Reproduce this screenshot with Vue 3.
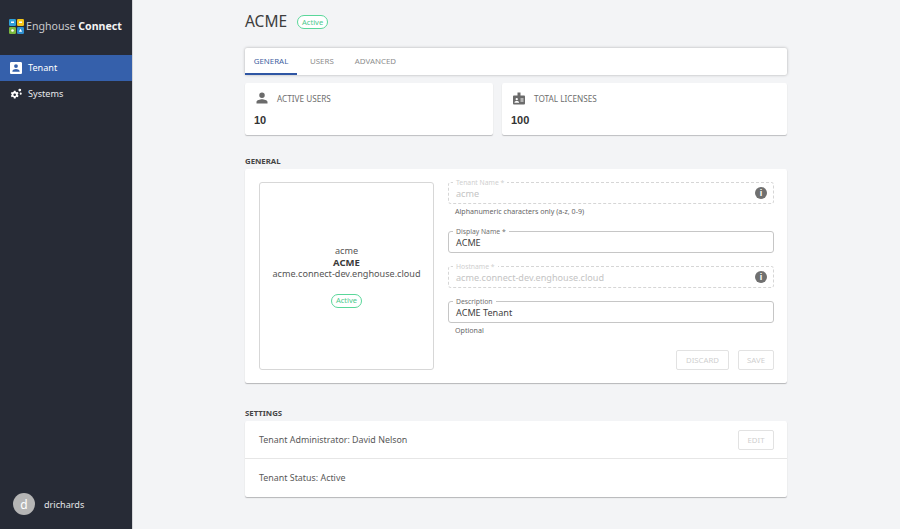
<script setup>
const fields = [
  { label: 'Tenant Name *', value: 'acme', disabled: true, hint: 'Alphanumeric characters only (a-z, 0-9)' },
  { label: 'Display Name *', value: 'ACME' },
  { label: 'Hostname *', value: 'acme.connect-dev.enghouse.cloud', disabled: true },
  { label: 'Description', value: 'ACME Tenant', hint: 'Optional' },
]
</script>

<template>
  <div class="app">
    <aside class="sidebar">
      <div class="logo">
        <svg class="logo-mark" width="15" height="15" viewBox="0 0 15 15">
          <rect x="0" y="0" width="7" height="7" rx="1.2" fill="#2f9fd8" />
          <rect x="8" y="0" width="7" height="7" rx="1.2" fill="#f5c518" />
          <rect x="0" y="8" width="7" height="7" rx="1.2" fill="#7cb83e" />
          <rect x="8" y="8" width="7" height="7" rx="1.2" fill="#2f8fd0" />
          <rect x="2" y="2.5" width="3" height="1.5" fill="#fff" />
          <rect x="10" y="2.5" width="3" height="1.5" fill="#fff" />
          <circle cx="3.5" cy="11.5" r="1.3" fill="#fff" />
          <path d="M11.5 9.8l1.6 3h-3.2z" fill="#fff" />
        </svg>
        <span class="logo-text">Enghouse <b>Connect</b></span>
      </div>
      <nav class="nav">
        <div class="nav-item active">
          <svg width="12" height="12" viewBox="0 0 12 12">
            <path fill-rule="evenodd" fill="#fff" d="M1.3 0h9.4C11.4 0 12 .6 12 1.3v9.4c0 .7-.6 1.3-1.3 1.3H1.3C.6 12 0 11.4 0 10.7V1.3C0 .6.6 0 1.3 0zM6 2.2a1.9 1.9 0 1 0 0 3.8 1.9 1.9 0 0 0 0-3.8zM2.4 9.8h7.2V9c0-1.3-2.4-2-3.6-2s-3.6.7-3.6 2z" />
          </svg>
          <span>Tenant</span>
        </div>
        <div class="nav-item">
          <svg width="12" height="12" viewBox="0 0 13 12">
            <path fill="#fff" fill-rule="evenodd" d="M4.2 2.4h1.8l.3 1.2.9.5 1.2-.4.9 1.6-.9.8v1l.9.8-.9 1.6-1.2-.4-.9.5-.3 1.2H4.2l-.3-1.2-.9-.5-1.2.4-.9-1.6.9-.8v-1l-.9-.8.9-1.6 1.2.4.9-.5zM5.1 5.4a1.4 1.4 0 1 0 0 2.8 1.4 1.4 0 0 0 0-2.8z" />
            <circle cx="10.6" cy="1.8" r="1.5" fill="#fff" />
            <circle cx="11.6" cy="5.6" r="1.1" fill="#fff" />
          </svg>
          <span>Systems</span>
        </div>
      </nav>
      <div class="user">
        <div class="avatar">d</div>
        <span>drichards</span>
      </div>
    </aside>

    <main class="main">
      <header class="title-row">
        <h1>ACME</h1>
        <span class="badge">Active</span>
      </header>

      <div class="tabs">
        <div class="tab active">GENERAL</div>
        <div class="tab">USERS</div>
        <div class="tab">ADVANCED</div>
      </div>

      <div class="stats">
        <div class="stat card users">
          <div class="stat-head">
            <svg width="12" height="12" viewBox="0 0 24 24"><path fill="#6b6b6b" d="M12 12a5.500 5.500 0 1 0 0-11 5.500 5.500 0 0 0 0 11zm0 2.500c-3.700 0-11 1.900-11 5.500v3h22v-3c0-3.600-7.300-5.500-11-5.500z" /></svg>
            <span>ACTIVE USERS</span>
          </div>
          <div class="stat-num">10</div>
        </div>
        <div class="stat card licenses">
          <div class="stat-head">
            <svg width="12" height="13" viewBox="0 0 24 26"><path fill="#6b6b6b" fill-rule="evenodd" d="M9 1h6v6h7c1 0 2 1 2 2v14c0 1-1 2-2 2H2c-1 0-2-1-2-2V9c0-1 1-2 2-2h7zM7.500 12a2.300 2.300 0 1 0 0 4.600 2.300 2.300 0 0 0 0-4.600zM3 21.500h9v-1.300c0-1.600-3-2.400-4.500-2.400S3 18.600 3 20.200zM15 13v2h6v-2zm0 4v2h6v-2z" /></svg>
            <span>TOTAL LICENSES</span>
          </div>
          <div class="stat-num">100</div>
        </div>
      </div>

      <h2 class="section first">GENERAL</h2>
      <section class="card general">
        <div class="preview">
          <div>acme</div>
          <div class="strong">ACME</div>
          <div>acme.connect-dev.enghouse.cloud</div>
          <span class="badge small">Active</span>
        </div>
        <div class="form">
          <div v-for="f in fields" :key="f.label" class="field-wrap">
            <div class="field" :class="{ disabled: f.disabled }">
              <span class="legend">{{ f.label }}</span>
              <span class="value">{{ f.value }}</span>
              <span v-if="f.disabled" class="info">i</span>
            </div>
            <div v-if="f.hint" class="hint">{{ f.hint }}</div>
          </div>
          <div class="actions">
            <button class="btn discard">DISCARD</button>
            <button class="btn save">SAVE</button>
          </div>
        </div>
      </section>

      <h2 class="section second">SETTINGS</h2>
      <section class="card settings">
        <div class="row">
          <span>Tenant Administrator: David Nelson</span>
          <button class="btn save">EDIT</button>
        </div>
        <div class="row">
          <span>Tenant Status: Active</span>
        </div>
      </section>
    </main>
  </div>
</template>

<style>
html, body { margin: 0; padding: 0; }
</style>

<style scoped>
.app {
  display: flex;
  width: 900px;
  height: 529px;
  overflow: hidden;
  background: #f3f4f6;
  font-family: "Noto Sans", "Open Sans", sans-serif;
  color: #4a4a4a;
}
svg { flex: none; }
.sidebar {
  width: 133px;
  box-sizing: border-box;
  flex: none;
  background: #272b36;
  border-right: 1px solid #d5d6d9;
  display: flex;
  flex-direction: column;
  color: #fff;
}
.logo {
  height: 55px;
  display: flex;
  align-items: center;
  gap: 2px;
  padding-left: 9px;
  padding-bottom: 3px;
  box-sizing: border-box;
}
.logo-text { font-size: 10.600px; color: #c9cacd; white-space: nowrap; }
.logo-text b { color: #f4f4f4; font-weight: 700; }
.nav-item {
  height: 26px;
  display: flex;
  align-items: center;
  gap: 6px;
  padding-left: 10px;
  padding-bottom: 1px;
  box-sizing: border-box;
  font-size: 9.100px;
  color: #e8e9eb;
}
.nav-item.active { background: #3560ab; color: #fff; }
.user {
  margin-top: auto;
  height: 49px;
  display: flex;
  align-items: center;
  gap: 9px;
  padding-left: 13px;
  padding-bottom: 1px;
  box-sizing: border-box;
  font-size: 9.100px;
  color: #e4e5e8;
}
.avatar {
  width: 22px;
  height: 22px;
  border-radius: 50%;
  background: #b5b5b5;
  color: #fff;
  display: flex;
  align-items: center;
  justify-content: center;
  font-size: 12px;
}
.main {
  width: 542px;
  margin-left: 112px;
  flex: none;
  display: flex;
  flex-direction: column;
}
.title-row {
  height: 48px;
  display: flex;
  align-items: center;
  gap: 10px;
  padding-bottom: 4px;
  box-sizing: border-box;
}
h1 {
  margin: 0;
  font-size: 15.500px;
  font-weight: 400;
  color: #3d3d3d;
  line-height: 1;
}
.badge {
  box-sizing: border-box;
  height: 14px;
  width: 31px;
  display: inline-flex;
  align-items: center;
  justify-content: center;
  border: 1px solid #5ad79a;
  border-radius: 7px;
  font-size: 7.500px;
  color: #4cc98c;
  background: #fff;
}
.card {
  background: #fff;
  border-radius: 2px;
  box-shadow: 0 1px 1px #c4c5c8;
}
.tabs {
  height: 27px;
  background: #fff;
  border-radius: 2px;
  box-shadow: 0 0 3px rgba(0,0,0,.3);
  display: flex;
  font-size: 7.900px;
  color: #8d8d8d;
}
.tab {
  box-sizing: border-box;
  height: 27px;
  padding-bottom: 2px;
  display: flex;
  align-items: center;
}
.tab:first-child { width: 52px; justify-content: center; margin-right: 13px; }
.tab:nth-child(2) { margin-right: 21px; }
.tab.active { color: #3f5f9f; border-bottom: 2px solid #2f56a4; padding-bottom: 0; }
.stats {
  margin-top: 8px;
  display: flex;
  gap: 9px;
}
.stat {
  height: 52px;
  box-sizing: border-box;
  padding: 8px 9px 0;
  box-shadow: 0 1px 1px #bdbec1;
}
.stat.users { width: 248px; flex: none; }
.stat.licenses { flex: 1; }
.stat-head {
  display: flex;
  align-items: center;
  gap: 9px;
  font-size: 8.200px;
  color: #6e6e6e;
  height: 14px;
  padding-left: 2px;
}
.stat-num {
  margin-top: 8px;
  font-family: "Liberation Sans", sans-serif;
  font-weight: 700;
  font-size: 11px;
  line-height: 14px;
  color: #333;
}
.section {
  margin: 0;
  font-size: 7.800px;
  font-weight: 700;
  color: #454545;
  line-height: 11px;
}
.section.first { margin-top: 21px; margin-bottom: 2px; }
.section.second { margin-top: 25px; margin-bottom: 2px; }
.general {
  height: 214px;
  box-sizing: border-box;
  padding: 13px 13px 0 14px;
  display: flex;
  gap: 14px;
  box-shadow: 0 1px 1px #b5b6b9;
}
.preview {
  box-sizing: border-box;
  width: 175px;
  height: 188px;
  border: 1px solid #d7d7d7;
  border-radius: 3px;
  display: flex;
  flex-direction: column;
  align-items: center;
  padding-top: 62px;
  font-size: 9.100px;
  line-height: 11.700px;
  color: #555;
}
.strong { font-weight: 700; color: #3b3b3b; font-size: 9.500px; }
.badge.small { margin-top: 14px; }
.form { flex: 1; display: flex; flex-direction: column; }
.field-wrap { height: 35px; }
.field-wrap:first-child { height: 49px; }
.field {
  position: relative;
  box-sizing: border-box;
  height: 22px;
  border: 1px solid #c6c6c6;
  border-radius: 3px;
  display: flex;
  align-items: center;
  padding: 0 7px;
  font-size: 9.100px;
  color: #3f3f3f;
}
.field.disabled { border: 1px dashed #d6d6d6; color: #c4c4c4; }
.legend {
  position: absolute;
  left: 4px;
  top: -5px;
  background: #fff;
  padding: 0 3px;
  font-size: 6.800px;
  line-height: 9px;
  color: #707070;
}
.field.disabled .legend { color: #cfcfcf; }
.info {
  position: absolute;
  right: 6px;
  top: 4px;
  width: 12px;
  height: 12px;
  border-radius: 50%;
  background: #707070;
  color: #fff;
  font-family: "Liberation Sans", sans-serif;
  font-weight: 700;
  font-size: 9px;
  line-height: 12px;
  text-align: center;
}
.hint {
  margin-top: 3px;
  padding-left: 7px;
  font-size: 7.100px;
  line-height: 9px;
  color: #666;
}
.actions {
  margin-top: auto;
  margin-bottom: 13px;
  display: flex;
  justify-content: flex-end;
  gap: 9px;
}
.btn {
  box-sizing: border-box;
  height: 20px;
  padding: 0;
  background: #fff;
  border: 1px solid #e2e2e2;
  border-radius: 2px;
  font-family: inherit;
  font-size: 7.800px;
  color: #cfcfcf;
}
.btn.discard { width: 53px; }
.btn.save { width: 36px; }
.settings { box-shadow: 0 1px 1px #b5b6b9; height: 76px; }
.row {
  height: 38px;
  box-sizing: border-box;
  padding: 0 13px 0 14px;
  display: flex;
  align-items: center;
  justify-content: space-between;
  font-size: 8.900px;
  color: #595959;
}
.row:first-child { border-bottom: 1px solid #e6e6e6; }
.row:last-child { padding-bottom: 2px; }
</style>
